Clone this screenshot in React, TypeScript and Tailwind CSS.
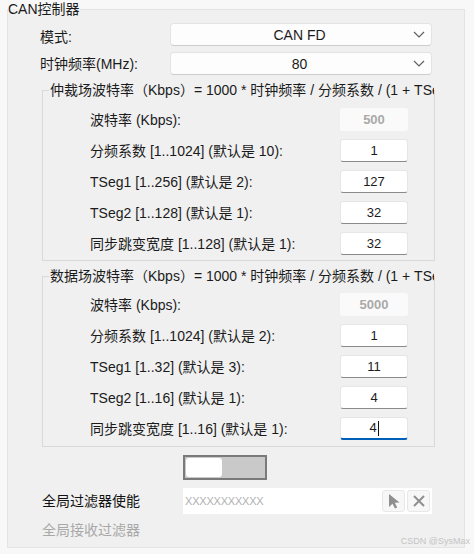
import React from "react";

const FONT = '"Liberation Sans", "Noto Sans CJK SC", sans-serif';

function Chevron() {
  return (
    <svg width="12" height="7" viewBox="0 0 12 7" className="shrink-0">
      <polyline points="1,1 6,6 11,1" fill="none" stroke="#5f5f5f" strokeWidth="1.2" />
    </svg>
  );
}

function Dropdown({ value }: { value: string }) {
  return (
    <div className="flex h-[23px] w-[262px] items-center rounded-[4px] border border-[#e3e3e3] border-b-[#cdcdcd] bg-[#fdfdfd] pr-[3px]">
      <div className="flex-1 pl-[18px] text-center text-[14px] leading-[18px] text-[#1b1b1b]">{value}</div>
      <div className="flex w-[18px] justify-center">
        <Chevron />
      </div>
    </div>
  );
}

type Row = { label: string; value: string; disabled?: boolean; focused?: boolean };

function NumInput({ row }: { row: Row }) {
  if (row.disabled) {
    return (
      <div className="flex h-[23px] w-[68px] items-center justify-center rounded-[3px] bg-[#fafafa] text-[13px] font-bold text-[#a9a9a9]">
        {row.value}
      </div>
    );
  }
  if (row.focused) {
    return (
      <div className="flex h-[23px] w-[68px] items-center justify-center rounded-[3px] border border-[#e6e6e6] border-b-2 border-b-[#005fb8] bg-white text-[13px] text-[#1b1b1b]">
        <span>{row.value}</span>
        <span className="ml-[1px] h-[15px] border-l border-[#111]" />
      </div>
    );
  }
  return (
    <div className="flex h-[23px] w-[68px] items-center justify-center rounded-[3px] border border-[#e6e6e6] border-b-[#8a8a8a] bg-white text-[13px] text-[#1b1b1b]">
      {row.value}
    </div>
  );
}

function GroupBox({ title, rows, first }: { title: string; rows: Row[]; first: number }) {
  return (
    <fieldset className="ml-[2px] h-[180px] w-[393px] border border-[#d9d9d9] p-0">
      <legend className="ml-[6px] w-[385px] overflow-hidden whitespace-nowrap px-[1px] text-[14px] leading-[18px] text-[#1b1b1b]">
        {title}
      </legend>
      <div className="flex flex-col gap-[8px] pl-[47px]" style={{ marginTop: first }}>
        {rows.map((r) => (
          <div key={r.label} className="flex h-[23px] items-center">
            <div className="w-[250px] whitespace-nowrap text-[14px] leading-[18px] text-[#1b1b1b]">{r.label}</div>
            <NumInput row={r} />
          </div>
        ))}
      </div>
    </fieldset>
  );
}

export default function App() {
  const g1: Row[] = [
    { label: "波特率 (Kbps):", value: "500", disabled: true },
    { label: "分频系数 [1..1024] (默认是 10):", value: "1" },
    { label: "TSeg1 [1..256] (默认是 2):", value: "127" },
    { label: "TSeg2 [1..128] (默认是 1):", value: "32" },
    { label: "同步跳变宽度 [1..128] (默认是 1):", value: "32" },
  ];
  const g2: Row[] = [
    { label: "波特率 (Kbps):", value: "5000", disabled: true },
    { label: "分频系数 [1..1024] (默认是 2):", value: "1" },
    { label: "TSeg1 [1..32] (默认是 3):", value: "11" },
    { label: "TSeg2 [1..16] (默认是 1):", value: "4" },
    { label: "同步跳变宽度 [1..16] (默认是 1):", value: "4", focused: true },
  ];
  const formula = "（Kbps）= 1000 * 时钟频率 / 分频系数 / (1 + TSeg1 + TSeg2)";

  return (
    <div className="relative h-[554px] w-[474px] overflow-hidden bg-[#f8f8f8]" style={{ fontFamily: FONT }}>
      <fieldset className="ml-[7px] h-[548px] w-[458px] border border-[#e4e4e4] bg-[#f0f0f0] p-0">
        <legend className="px-0 text-[14px] leading-[18px] text-[#1b1b1b]">CAN控制器</legend>
        <div className="flex flex-col pl-[32px]">
          <div className="mt-[5px] flex h-[23px] items-stretch">
            <div className="w-[130px] self-end text-[14px] leading-[18px] text-[#1b1b1b]">模式:</div>
            <Dropdown value="CAN FD" />
          </div>
          <div className="mt-[6px] flex h-[23px] items-center">
            <div className="w-[130px] text-[14px] leading-[18px] text-[#1b1b1b]">时钟频率(MHz):</div>
            <Dropdown value="80" />
          </div>
          <div className="mt-[6px]">
            <GroupBox title={"仲裁场波特率" + formula} rows={g1} first={9} />
          </div>
          <div className="mt-[6px]">
            <GroupBox title={"数据场波特率" + formula} rows={g2} first={8} />
          </div>
          <div className="ml-[143px] mt-[8px] flex h-[25px] w-[84px] border-2 border-[#7a7a7a] bg-[#c9c9c9] p-[1px]">
            <div className="h-[19px] w-[36px] rounded-[3px] bg-white" />
          </div>
          <div className="mt-[8px] flex h-[26px] items-center">
            <div className="w-[143px] pl-[2px] text-[14px] leading-[18px] text-[#111]">全局过滤器使能</div>
            <div className="flex h-[26px] w-[249px] items-center bg-white pl-[2px] pr-[2px]">
              <div className="flex-1 text-[11px] tracking-[-0.2px] text-[#b0b0b0]">XXXXXXXXXXX</div>
              <div className="flex h-[22px] w-[23px] items-center justify-center rounded-[3px] border border-[#e8e8e8] bg-[#f7f7f7]">
                <svg width="14" height="16" viewBox="0 0 14 16">
                  <path d="M2 1 L2 14 L5.5 10.8 L8 15.5 L10.2 14.4 L7.8 9.8 L12.5 9.6 Z" fill="#8f8f8f" />
                </svg>
              </div>
              <div className="ml-[2px] flex h-[22px] w-[23px] items-center justify-center rounded-[3px] border border-[#e8e8e8] bg-[#f7f7f7]">
                <svg width="14" height="14" viewBox="0 0 14 14">
                  <path d="M2 2 L12 12 M12 2 L2 12" stroke="#8f8f8f" strokeWidth="2" />
                </svg>
              </div>
            </div>
          </div>
          <div className="mt-[7px] pl-[2px] text-[14px] leading-[18px] text-[#a8a8a8]">全局接收过滤器</div>
        </div>
      </fieldset>
      <div className="absolute bottom-[8px] right-[4px] text-[9px] leading-[10px] text-[#c4c4c4]">CSDN @SysMax</div>
    </div>
  );
}
